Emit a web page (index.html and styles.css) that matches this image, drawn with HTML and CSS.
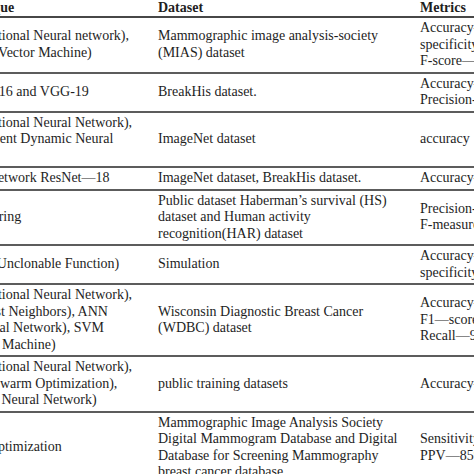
FILE: index.html
```html
<!DOCTYPE html>
<html lang="en">
<head>
<meta charset="utf-8">
<title>Table</title>
<link rel="stylesheet" href="styles.css">
</head>
<body>
<div class="frame">
<table class="tbl">
<colgroup><col class="c1"><col class="c2"><col class="c3"></colgroup>
<thead>
<tr><th>Smart Technique</th><th>Dataset</th><th>Metrics</th></tr>
</thead>
<tbody>
<tr><td>CNN (Convolutional Neural network),<br>SVM (Support Vector Machine)</td><td>Mammographic image analysis-society<br>(MIAS) dataset</td><td>Accuracy—96.5%,<br>specificity—96.8%,<br>F-score—97%</td></tr>
<tr><td>DCNNs, VGG-16 and VGG-19</td><td>BreakHis dataset.</td><td>Accuracy—95%,<br>Precision-95%</td></tr>
<tr><td>CNN (Convolutional Neural Network),<br>TDNNs (Transient Dynamic Neural<br>Network)</td><td>ImageNet dataset</td><td>accuracy</td></tr>
<tr><td>Deep-Neural Network ResNet—18</td><td>ImageNet dataset, BreakHis dataset.</td><td>Accuracy—92%</td></tr>
<tr><td>k-means Clustering</td><td>Public dataset Haberman’s survival (HS)<br>dataset and Human activity<br>recognition(HAR) dataset</td><td>Precision-90%,<br>F-measure-89%</td></tr>
<tr><td>PUF (Physical Unclonable Function)</td><td>Simulation</td><td>Accuracy—93%,<br>specificity—94%</td></tr>
<tr><td>CNN (Convolutional Neural Network),<br>KNN (K-nearest Neighbors), ANN<br>(Artificial Neural Network), SVM<br>(support Vector Machine)</td><td>Wisconsin Diagnostic Breast Cancer<br>(WDBC) dataset</td><td>Accuracy—98%,<br>F1—score—97%,<br>Recall—96%</td></tr>
<tr><td>CNN (Convolutional Neural Network),<br>PSO (Particle Swarm Optimization),<br>ANN (artificial Neural Network)</td><td>public training datasets</td><td>Accuracy—97%</td></tr>
<tr><td>Wolf Colony Optimization</td><td>Mammographic Image Analysis Society<br>Digital Mammogram Database and Digital<br>Database for Screening Mammography<br>breast cancer database</td><td>Sensitivity—90%,<br>PPV—85%</td></tr>
</tbody>
</table>
</div>
</body>
</html>
```
FILE: styles.css
```css
html, body {
  margin: 0;
  padding: 0;
  background: #ffffff;
}
body {
  width: 474px;
  height: 474px;
  overflow: hidden;
}
.frame {
  width: 474px;
  height: 474px;
  overflow: hidden;
}
.tbl {
  border-collapse: collapse;
  table-layout: fixed;
  width: 708px;
  margin: -2px 0 0 -96px;
  font-family: "Liberation Serif", "Times New Roman", serif;
  font-size: 14px;
  line-height: 16.5px;
  color: #1e1e1e;
}
.c1 { width: 246px; }
.c2 { width: 262px; }
.c3 { width: 200px; }
.tbl th {
  text-align: left;
  font-weight: bold;
  padding: 1.5px 8px 0;
  border-bottom: 2px solid #474747;
  white-space: nowrap;
}
.tbl td {
  text-align: left;
  vertical-align: middle;
  padding: 2px 8px;
  border-bottom: 2px solid #5c5c5c;
  white-space: nowrap;
}
```
